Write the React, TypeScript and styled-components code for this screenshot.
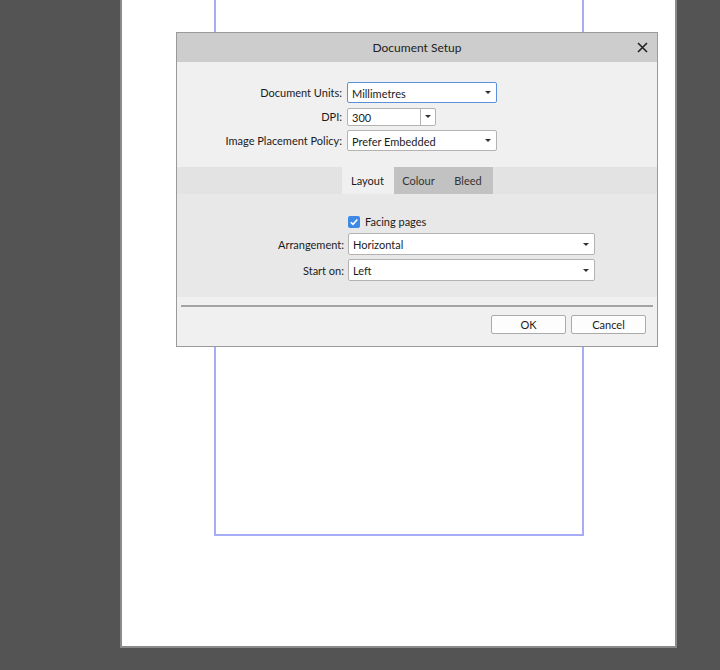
import React from "react";
import styled, { createGlobalStyle } from "styled-components";

const Global = createGlobalStyle`
  html, body { margin: 0; padding: 0; background: #545454; }
  body { font-family: Lato, "Noto Sans", sans-serif; }
`;

const Workspace = styled.div`
  position: relative;
  width: 720px;
  height: 670px;
  overflow: hidden;
  background: #545454;
`;

const Page = styled.div`
  position: absolute;
  left: 120px;
  top: -4px;
  width: 553px;
  height: 648px;
  background: #ffffff;
  border: 2px solid #8a8a8a;
`;

const MarginGuide = styled.div`
  position: absolute;
  left: 92px;
  top: -10px;
  width: 366px;
  height: 544px;
  border: 2px solid #a6adf5;
`;

const Dialog = styled.div`
  position: absolute;
  left: 176px;
  top: 32px;
  width: 480px;
  height: 313px;
  border: 1px solid #9a9a9a;
  background: #f0f0f0;
  display: flex;
  flex-direction: column;
  color: #1b1b1b;
  font-size: 11px;
`;

const TitleBar = styled.div`
  height: 29px;
  flex-shrink: 0;
  background: #cdcdcd;
  display: flex;
  align-items: center;
  justify-content: center;
  position: relative;
  font-size: 12px;
  color: #222;
`;

const CloseButton = styled.div`
  position: absolute;
  right: 9px;
  top: 9px;
  width: 11px;
  height: 11px;
  display: flex;
`;

const Form = styled.div<{ $label: number; $gap: number; $rows: string; $rowGap: number }>`
  display: grid;
  grid-template-columns: ${(p) => p.$label}px auto;
  grid-template-rows: ${(p) => p.$rows};
  justify-content: start;
  column-gap: ${(p) => p.$gap}px;
  row-gap: ${(p) => p.$rowGap}px;
  align-items: center;
`;

const TopSection = styled.div`
  padding-top: 20px;
  padding-bottom: 16px;
`;

const Label = styled.div`
  text-align: right;
  white-space: nowrap;
`;

const SelectBox = styled.div<{ $w: number; $h?: number; $focus?: boolean }>`
  width: ${(p) => p.$w}px;
  height: ${(p) => p.$h ?? 21}px;
  box-sizing: border-box;
  border: 1px solid ${(p) => (p.$focus ? "#5b8fd9" : "#b3b3b3")};
  border-radius: 2px;
  background: #ffffff;
  display: flex;
  align-items: center;
  padding-left: 4px;
`;

const SelectText = styled.span`
  flex: 1;
  white-space: nowrap;
  padding-top: 1px;
`;

const Arrow = styled.div`
  width: 0;
  height: 0;
  border-left: 3px solid transparent;
  border-right: 3px solid transparent;
  border-top: 3px solid #333;
  margin-right: 5px;
`;

const SplitButton = styled.div`
  width: 14px;
  height: 100%;
  border-left: 1px solid #b3b3b3;
  display: flex;
  align-items: center;
  justify-content: center;
  & > div { margin-right: 0; }
`;

const TabBand = styled.div`
  height: 27px;
  flex-shrink: 0;
  background: #e3e3e3;
  display: flex;
  justify-content: center;
`;

const Tab = styled.div<{ $active?: boolean; $w: number }>`
  width: ${(p) => p.$w}px;
  height: 100%;
  display: flex;
  align-items: center;
  justify-content: center;
  background: ${(p) => (p.$active ? "#f0f0f0" : "#c2c2c2")};
  color: ${(p) => (p.$active ? "#1b1b1b" : "#333")};
`;

const Panel = styled.div`
  background: #e8e8e8;
  padding: 20px 0 16px;
`;

const CheckRow = styled.div`
  display: flex;
  align-items: center;
  gap: 5px;
`;

const Checkbox = styled.div`
  width: 12px;
  height: 12px;
  border-radius: 2px;
  background: #3c8ae6;
  display: flex;
  align-items: center;
  justify-content: center;
`;

const Separator = styled.div`
  margin: 8px 4px 0;
  height: 2px;
  flex-shrink: 0;
  background: #a3a3a3;
`;

const Footer = styled.div`
  display: flex;
  justify-content: flex-end;
  gap: 5px;
  padding: 8px 11px 0 0;
`;

const Button = styled.div`
  width: 75px;
  height: 19px;
  box-sizing: border-box;
  border: 1px solid #ababab;
  border-radius: 2px;
  background: #fdfdfd;
  display: flex;
  align-items: center;
  justify-content: center;
`;

const Select: React.FC<{ w: number; text: string; focus?: boolean; h?: number }> = ({ w, text, focus, h }) => (
  <SelectBox $w={w} $focus={focus} $h={h}>
    <SelectText>{text}</SelectText>
    <Arrow />
  </SelectBox>
);

export default function App() {
  return (
    <>
      <Global />
      <Workspace>
        <Page>
          <MarginGuide />
        </Page>
        <Dialog>
          <TitleBar>
            Document Setup
            <CloseButton>
              <svg width="11" height="11" viewBox="0 0 11 11">
                <path d="M1 1 L10 10 M10 1 L1 10" stroke="#222" strokeWidth="1.6" />
              </svg>
            </CloseButton>
          </TitleBar>
          <TopSection>
            <Form $label={165} $gap={5} $rows="21px 21px 21px" $rowGap={3}>
              <Label>Document Units:</Label>
              <Select w={150} text="Millimetres" focus />
              <Label>DPI:</Label>
              <SelectBox $w={89} $h={18}>
                <SelectText>300</SelectText>
                <SplitButton>
                  <Arrow />
                </SplitButton>
              </SelectBox>
              <Label>Image Placement Policy:</Label>
              <Select w={150} text="Prefer Embedded" />
            </Form>
          </TopSection>
          <TabBand>
            <Tab $active $w={52}>Layout</Tab>
            <Tab $w={50}>Colour</Tab>
            <Tab $w={49}>Bleed</Tab>
          </TabBand>
          <Panel>
            <Form $label={167} $gap={4} $rows="15px 22px 22px" $rowGap={4}>
              <div />
              <CheckRow>
                <Checkbox>
                  <svg width="10" height="10" viewBox="0 0 10 10">
                    <path d="M1.8 5.2 L4 7.4 L8.3 2.5" stroke="#fff" strokeWidth="1.6" fill="none" />
                  </svg>
                </Checkbox>
                Facing pages
              </CheckRow>
              <Label>Arrangement:</Label>
              <Select w={247} h={22} text="Horizontal" />
              <Label>Start on:</Label>
              <Select w={247} h={22} text="Left" />
            </Form>
          </Panel>
          <Separator />
          <Footer>
            <Button>OK</Button>
            <Button>Cancel</Button>
          </Footer>
        </Dialog>
      </Workspace>
    </>
  );
}
